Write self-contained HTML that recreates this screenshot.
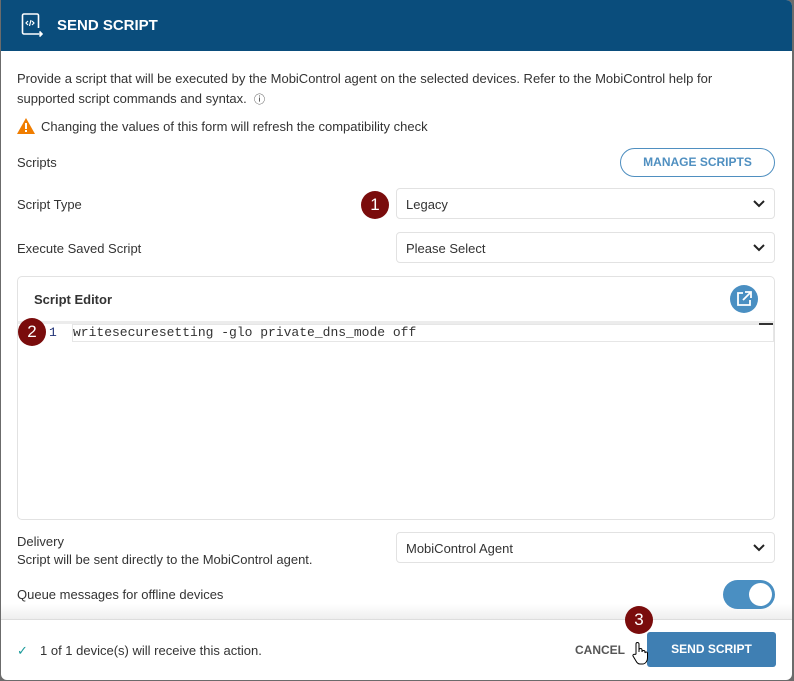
<!DOCTYPE html>
<html><head><style>
*{box-sizing:border-box;margin:0;padding:0}
body{width:794px;height:681px;background:#6b6b6b;font-family:"Liberation Sans",sans-serif;font-size:13px;color:#333;position:relative;overflow:hidden}
#dlg{position:absolute;left:1px;top:0;width:791px;height:680px;background:#fff;border-radius:0 6px 6px 6px;overflow:hidden}
.hdr{position:absolute;left:0;top:0;width:100%;height:51px;background:#0a4d7c;color:#fff}
.a{position:absolute;white-space:nowrap}
.sel{position:absolute;left:395px;width:379px;height:31px;border:1px solid #e2e2e2;border-radius:4px;padding:8px 9px;font-size:13px;color:#333}
.chev{position:absolute;right:9px;top:10px}
.badge{position:absolute;width:28px;height:28px;border-radius:50%;background:#7a0c0c;color:#fff;font-size:17px;text-align:center;line-height:28px}
</style></head><body>
<div id="dlg">
<div class="hdr">
<svg class="a" style="left:20px;top:13px" width="22" height="26" viewBox="0 0 22 26" fill="none" stroke="#fff" stroke-width="1.6"><path d="M14 21H3a1.5 1.5 0 0 1-1.5-1.5V2.5A1.5 1.5 0 0 1 3 1h13a1.5 1.5 0 0 1 1.5 1.5V15"/><path d="M7 8l-2 2 2 2M11 8l2 2-2 2M10 7l-1.5 6" stroke-width="1.2"/><path d="M14 21h7M18.5 18.5L21 21l-2.5 2.5"/></svg>
<div class="a" style="left:56px;top:17px;font-size:15px;font-weight:bold">SEND SCRIPT</div>
</div>
<div class="a" style="left:16px;top:69px;line-height:20px">Provide a script that will be executed by the MobiControl agent on the selected devices. Refer to the MobiControl help for<br>supported script commands and syntax. &nbsp;<span style="font-size:11px">ⓘ</span></div>
<svg class="a" style="left:16px;top:118px" width="18" height="16" viewBox="0 0 18 16"><path d="M9 0L18 16H0z" fill="#f07d00"/><rect x="8" y="5" width="2" height="6" fill="#fff"/><rect x="8" y="12" width="2" height="2" fill="#fff"/></svg>
<div class="a" style="left:40px;top:119px">Changing the values of this form will refresh the compatibility check</div>
<div class="a" style="left:16px;top:155px">Scripts</div>
<div class="a" style="left:619px;top:148px;width:155px;height:29px;border:1px solid #4f8fc0;border-radius:15px;color:#4f8fc0;font-weight:bold;font-size:12px;text-align:center;line-height:27px">MANAGE SCRIPTS</div>
<div class="a" style="left:16px;top:197px">Script Type</div>
<div class="badge" style="left:360px;top:191px">1</div>
<div class="sel" style="top:188px">Legacy<svg class="chev" width="12" height="9" viewBox="0 0 12 9"><path d="M1 2l5 5 5-5" stroke="#222" stroke-width="2" fill="none"/></svg></div>
<div class="a" style="left:16px;top:241px">Execute Saved Script</div>
<div class="sel" style="top:232px">Please Select<svg class="chev" width="12" height="9" viewBox="0 0 12 9"><path d="M1 2l5 5 5-5" stroke="#222" stroke-width="2" fill="none"/></svg></div>
<div class="a" style="left:16px;top:276px;width:758px;height:244px;border:1px solid #e2e2e2;border-radius:5px;overflow:hidden">
 <div class="a" style="left:16px;top:15px;font-weight:bold;font-size:13px">Script Editor</div>
 <div class="a" style="left:712px;top:8px;width:28px;height:28px;border-radius:50%;background:#4a8fc2"><svg width="28" height="28" viewBox="0 0 28 28" fill="none" stroke="#fff" stroke-width="1.8"><path d="M13 8H8v12h12v-5M15 7h6v6M21 7l-8 8"/></svg></div>
 <div class="a" style="left:0;top:44px;width:756px;height:3px;background:#ececec"></div>
 <div class="a" style="left:54px;top:47px;width:702px;height:18px;border:1px solid #e6e6e6"></div>
 <div class="a" style="left:741px;top:46px;width:14px;height:2px;background:#333"></div>
 <div class="a" style="left:31px;top:48px;font-family:'Liberation Mono',monospace;font-size:13px;color:#237">1</div>
 <div class="a" style="left:55px;top:48px;font-family:'Liberation Mono',monospace;font-size:13px;color:#333">writesecuresetting -glo private_dns_mode off</div>
</div>
<div class="badge" style="left:17px;top:318px">2</div>
<div class="a" style="left:16px;top:534px">Delivery</div>
<div class="a" style="left:16px;top:552px">Script will be sent directly to the MobiControl agent.</div>
<div class="sel" style="top:532px">MobiControl Agent<svg class="chev" width="12" height="9" viewBox="0 0 12 9"><path d="M1 2l5 5 5-5" stroke="#222" stroke-width="2" fill="none"/></svg></div>
<div class="a" style="left:16px;top:587px">Queue messages for offline devices</div>
<div class="a" style="left:0;top:604px;width:100%;height:15px;background:linear-gradient(rgba(255,255,255,0),#eee)"></div>
<div class="a" style="left:722px;top:580px;width:52px;height:29px;border-radius:15px;background:#4a8fc2"><div class="a" style="left:26px;top:3px;width:23px;height:23px;border-radius:50%;background:#fff"></div></div>
<div class="a" style="left:0;top:619px;width:100%;height:1px;background:#ddd"></div>
<div class="a" style="left:16px;top:643px;color:#1a9a9a;font-size:13px">✓</div>
<div class="a" style="left:39px;top:643px">1 of 1 device(s) will receive this action.</div>
<div class="a" style="left:574px;top:643px;font-weight:bold;font-size:12px;color:#555">CANCEL</div>
<div class="a" style="left:646px;top:632px;width:129px;height:35px;background:#3f7fb3;border-radius:3px;color:#fff;font-weight:bold;font-size:12px;text-align:center;line-height:35px">SEND SCRIPT</div>
<div class="badge" style="left:624px;top:606px">3</div>
<svg class="a" style="left:631px;top:641px" width="16" height="24" viewBox="0 0 16 24"><path d="M4 13V3a1.5 1.5 0 0 1 3 0v8V9a1.5 1.5 0 0 1 3 0v2a1.5 1.5 0 0 1 3 0v1a1.3 1.3 0 0 1 2.5 0v5c0 3-2 6-5 6H8c-2 0-3-1-4-3l-3-5a1.3 1.3 0 0 1 2-1.5z" fill="#fff" stroke="#000" stroke-width="1"/></svg>
</div>
</body></html>
